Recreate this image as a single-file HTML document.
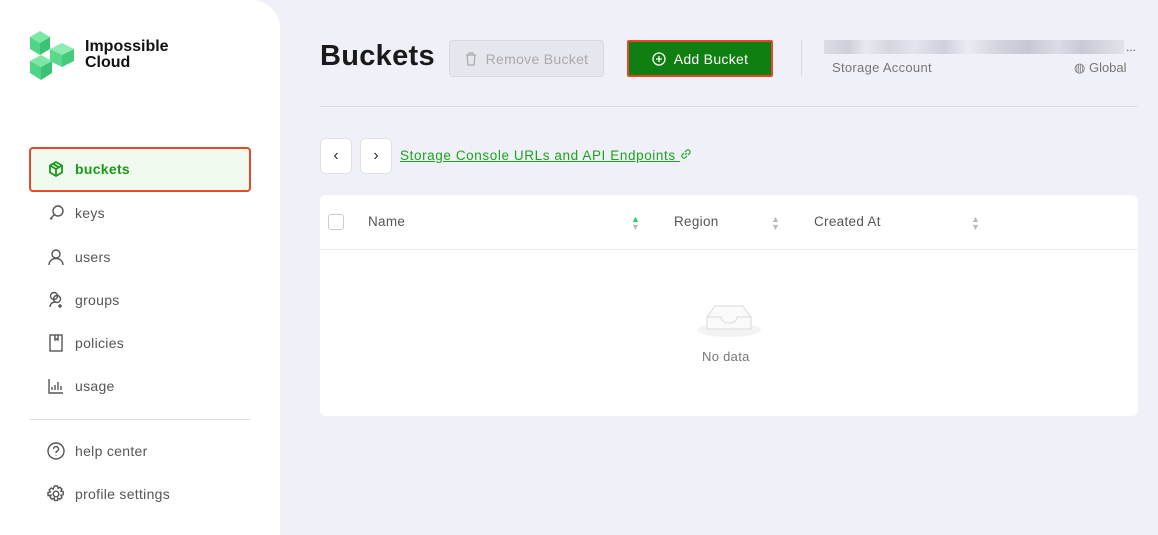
<!DOCTYPE html>
<html><head><style>
*{box-sizing:border-box;margin:0;padding:0}
body{width:1158px;height:535px;background:#f0f0f9;font-family:"Liberation Sans",sans-serif;position:relative;overflow:hidden;color:#333}
.side{position:absolute;left:0;top:0;width:280px;height:535px;background:#fff;border-top-right-radius:28px}
.logo{position:absolute;left:29px;top:29px}
.brand{position:absolute;left:85px;top:39px;font-weight:bold;font-size:16px;line-height:16px;color:#111}
.nav{position:absolute;left:47px;font-size:14px;color:#555;display:flex;align-items:center;letter-spacing:.3px}
.nav svg{width:18px;height:18px;margin-right:10px;stroke:#555;fill:none;stroke-width:1.4}
.active{position:absolute;left:29px;top:147px;width:222px;height:45px;border:2px solid #e8472a;border-radius:4px;background:#eff9ed}
.abs{position:absolute}
.th{font-size:13.5px;color:#555;letter-spacing:.3px}
</style></head><body>
<div class="side">
 <svg class="logo" width="50" height="52" viewBox="0 0 50 52">
  <polygon points="1,8 11,2 21,8 11,14" fill="#7de8a6"/><polygon points="1,8 11,14 11,26 1,20" fill="#4fd585"/><polygon points="21,8 11,14 11,26 21,20" fill="#3cc274"/>
  <polygon points="21,20 33,14 45,20 33,26" fill="#8eecb2"/><polygon points="21,20 33,26 33,38 21,32" fill="#5ad88c"/><polygon points="45,20 33,26 33,38 45,32" fill="#46cb7c"/>
  <polygon points="1,32 12,26 23,32 12,38" fill="#7de8a6"/><polygon points="1,32 12,38 12,51 1,44" fill="#4fd585"/><polygon points="23,32 12,38 12,51 23,44" fill="#3cc274"/>
 </svg>
 <div class="brand">Impossible<br>Cloud</div>
 <div class="active"></div>
 <div class="nav" style="top:160px;color:#1a9a1a;font-weight:bold"><svg viewBox="0 0 18 18" style="stroke:#1a9a1a;stroke-width:1.8"><path d="M9 2l6 3.5v7L9 16l-6-3.5v-7z M3 5.5L9 9l6-3.5 M9 9v7 M6 3.8l6 3.5"/></svg>buckets</div>
 <div class="nav" style="top:204px"><svg viewBox="0 0 18 18"><circle cx="11" cy="7" r="5"/><path d="M7.5 10.5L3 15 M4 14l1 1.5"/></svg>keys</div>
 <div class="nav" style="top:248px"><svg viewBox="0 0 18 18"><circle cx="9" cy="6" r="4"/><path d="M2 17c0-4 3-6.5 7-6.5s7 2.5 7 6.5"/></svg>users</div>
 <div class="nav" style="top:291px"><svg viewBox="0 0 18 18"><circle cx="7" cy="5" r="3.5"/><circle cx="10" cy="8" r="3.5"/><path d="M3 16c0-3 2-5 6-5 M13 13v4 M11 15h4"/></svg>groups</div>
 <div class="nav" style="top:334px"><svg viewBox="0 0 18 18"><rect x="3" y="1" width="12" height="16"/><path d="M8 1v5l1.5-1 1.5 1V1"/></svg>policies</div>
 <div class="nav" style="top:377px"><svg viewBox="0 0 18 18"><path d="M2 2v14h14 M5 13v-3 M8 13V8 M11 13V5 M14 13v-4"/></svg>usage</div>
 <div class="abs" style="left:30px;top:419px;width:220px;height:1px;background:#dcdce8"></div>
 <div class="nav" style="top:442px"><svg viewBox="0 0 18 18"><circle cx="9" cy="9" r="8"/><path d="M6.5 7a2.5 2.5 0 1 1 3.5 2.3c-.7.3-1 .8-1 1.7 M9 13.5v.5"/></svg>help center</div>
 <div class="nav" style="top:485px"><svg viewBox="0 0 18 18"><circle cx="9" cy="9" r="2.8"/><path d="M7.5 1h3l.5 2.3 2-1.1 2 2-1.1 2 2.3.5v3l-2.3.5 1.1 2-2 2-2-1.1-.5 2.3h-3l-.5-2.3-2 1.1-2-2 1.1-2L1 10.5v-3l2.3-.5-1.1-2 2-2 2 1.1z"/></svg>profile settings</div>
</div>
<div class="abs" style="left:320px;top:40px;font-size:29px;font-weight:bold;color:#1a1a1a;letter-spacing:.3px">Buckets</div>
<div class="abs" style="left:449px;top:40px;width:155px;height:37px;border:1px solid #d8d8e2;border-radius:4px;background:#e6e6ee;color:#aaa;font-size:14px;display:flex;align-items:center;justify-content:center;letter-spacing:.3px"><svg width="12" height="14" viewBox="0 0 12 14" style="margin-right:9px" fill="none" stroke="#aaa" stroke-width="1.2"><path d="M1 3h10 M4 3V1h4v2 M2 3l1 10h6l1-10"/></svg>Remove Bucket</div>
<div class="abs" style="left:627px;top:40px;width:146px;height:37px;border:2px solid #e8472a;border-radius:2px;background:#0f7f11;color:#fff;font-size:14px;display:flex;align-items:center;justify-content:center;letter-spacing:.3px"><svg width="14" height="14" viewBox="0 0 14 14" style="margin-right:8px" fill="none" stroke="#fff" stroke-width="1.3"><circle cx="7" cy="7" r="6"/><path d="M7 4v6M4 7h6"/></svg>Add Bucket</div>
<div class="abs" style="left:801px;top:40px;width:1px;height:36px;background:#d8d8e2"></div>
<div class="abs" style="left:824px;top:40px;width:300px;height:14px;background:linear-gradient(90deg,#dcdce6 0%,#cfcfda 8%,#e8e8f0 14%,#d6d6e0 22%,#e4e4ee 30%,#d0d0dc 40%,#ebebf3 48%,#d4d4de 58%,#c8c8d4 68%,#dcdce6 78%,#cacad6 86%,#e2e2ea 100%)"></div>
<div class="abs" style="left:1126px;top:40px;font-size:12px;color:#555">...</div>
<div class="abs" style="left:832px;top:60px;font-size:13px;color:#777;letter-spacing:.3px">Storage Account</div>
<div class="abs" style="left:1074px;top:60px;font-size:13px;color:#777">◍ Global</div>
<div class="abs" style="left:320px;top:106px;width:818px;height:1px;background:#dcdce6"></div>
<div class="abs" style="left:320px;top:138px;width:32px;height:36px;background:#fff;border:1px solid #e0e0ea;border-radius:5px;text-align:center;line-height:34px;font-size:16px">‹</div>
<div class="abs" style="left:360px;top:138px;width:32px;height:36px;background:#fff;border:1px solid #e0e0ea;border-radius:5px;text-align:center;line-height:34px;font-size:16px">›</div>
<div class="abs" style="left:400px;top:148px;font-size:13.5px;color:#1aa51a;text-decoration:underline;letter-spacing:.6px">Storage Console URLs and API Endpoints <svg width="12" height="12" viewBox="0 0 12 12" fill="none" stroke="#1aa51a" stroke-width="1.2"><path d="M5 7l2-2 M4 5L2.5 6.5a2 2 0 0 0 3 3L7 8 M8 7l1.5-1.5a2 2 0 0 0-3-3L5 4"/></svg></div>
<div class="abs" style="left:320px;top:195px;width:818px;height:221px;background:#fff;border-radius:6px"></div>
<div class="abs" style="left:328px;top:214px;width:16px;height:16px;border:1px solid #ccc;border-radius:3px"></div>
<div class="abs th" style="left:368px;top:214px">Name</div>
<div class="abs th" style="left:674px;top:214px">Region</div>
<div class="abs th" style="left:814px;top:214px">Created At</div>
<div class="abs" style="left:631px;top:215px;font-size:9px;line-height:8px;color:#2fcf5f">▲<br><span style="color:#bbb">▼</span></div>
<div class="abs" style="left:771px;top:215px;font-size:9px;line-height:8px;color:#bbb">▲<br>▼</div>
<div class="abs" style="left:971px;top:215px;font-size:9px;line-height:8px;color:#bbb">▲<br>▼</div>
<div class="abs" style="left:320px;top:249px;width:818px;height:1px;background:#eee"></div>
<svg class="abs" style="left:697px;top:297px" width="64" height="41" viewBox="0 0 64 41"><ellipse cx="32" cy="33" rx="32" ry="7" fill="#f3f3f3"/><path d="M10 20l8-11h28l8 11v12H10z" fill="#fafafa" stroke="#d9d9d9"/><path d="M10 20h14c0 4 4 6 8 6s8-2 8-6h14" fill="none" stroke="#d9d9d9"/></svg>
<div class="abs" style="left:702px;top:349px;font-size:13px;color:#777;letter-spacing:.3px">No data</div>
</body></html>
